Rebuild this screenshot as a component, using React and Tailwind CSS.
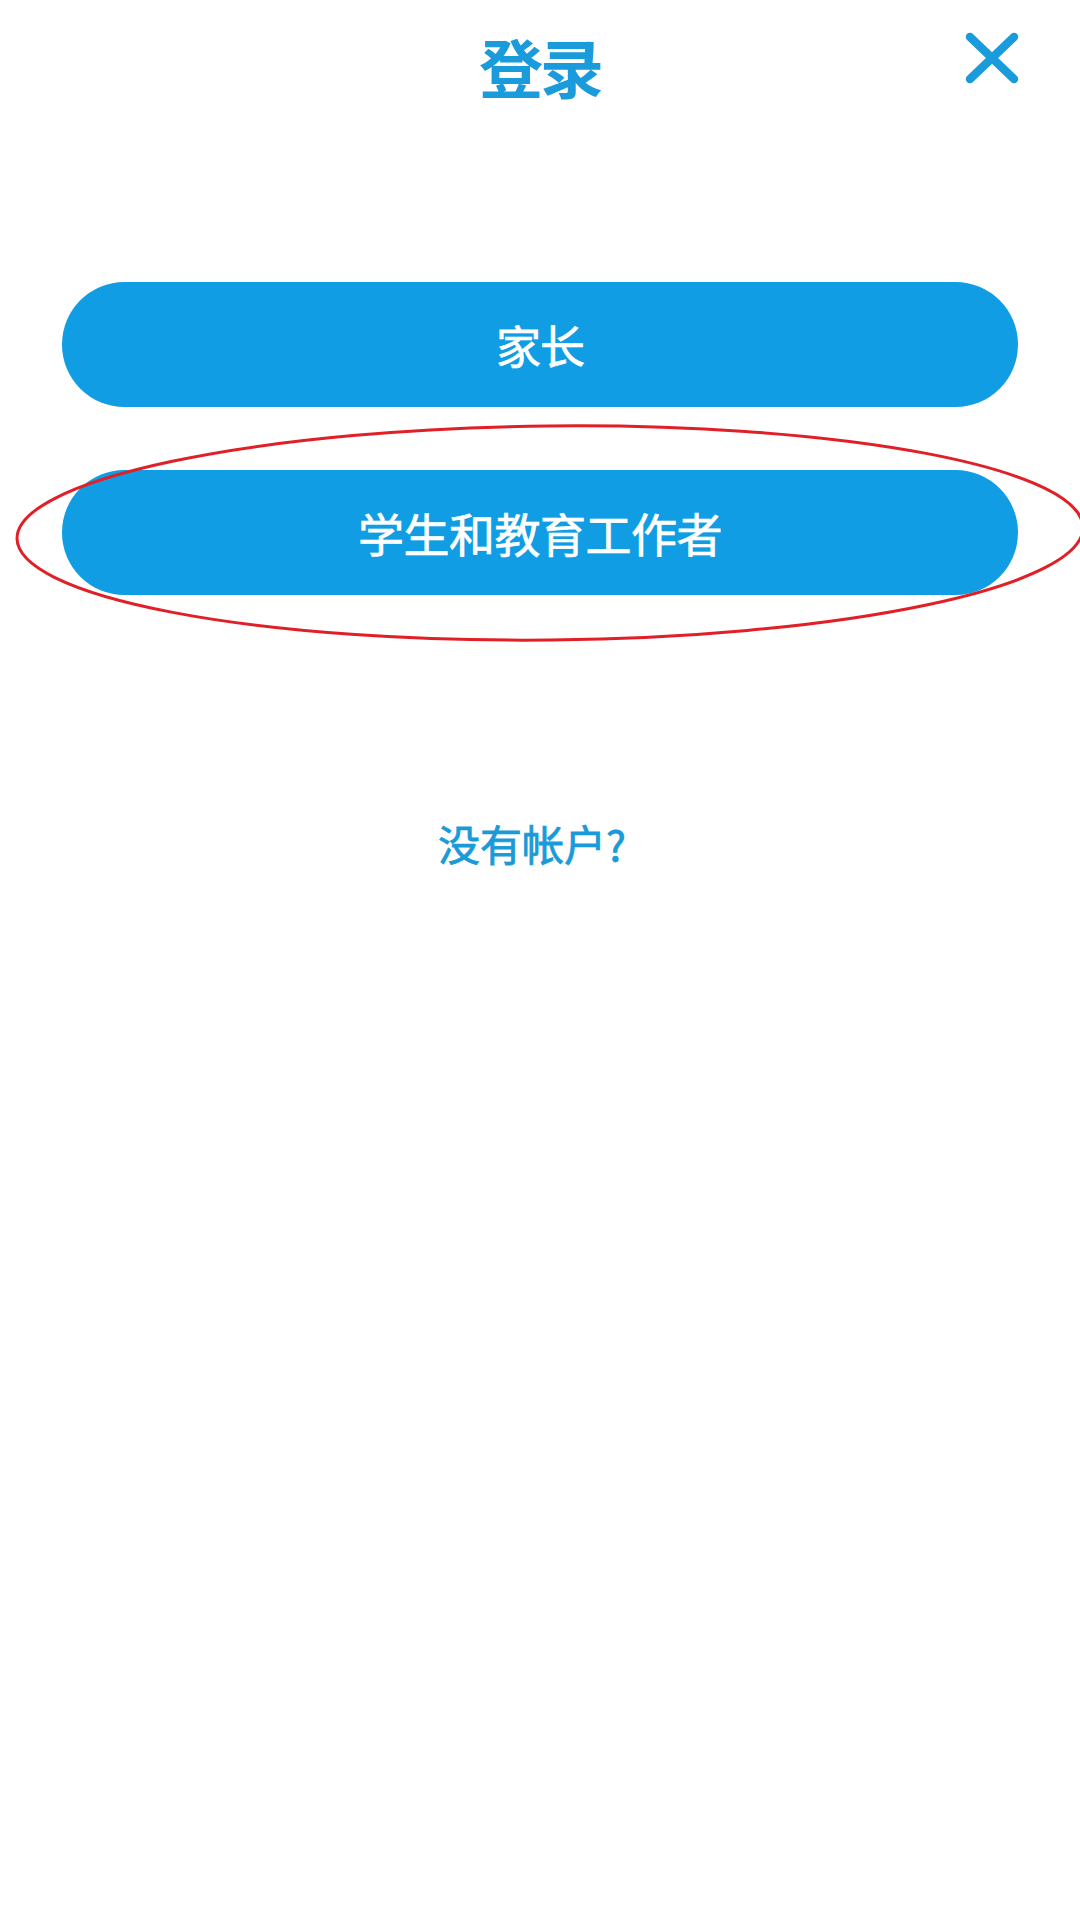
import React from "react";

const cjk = { fontFamily: '"Noto Sans CJK SC", "Noto Sans", sans-serif' };

export default function App() {
  return (
    <div className="relative w-[1080px] h-[1920px] bg-white overflow-hidden" style={cjk}>
      {/* header */}
      <header className="relative h-[130px] flex items-center justify-center">
        <h1 className="text-[64px] leading-none font-bold text-[#1a9bdc] tracking-[-3px]">登录</h1>
        <button className="absolute right-[60px] top-[32px] w-[56px] h-[52px] flex items-center justify-center">
          <svg width="56" height="52" viewBox="0 0 56 52" fill="none">
            <path d="M6 5 L50 47 M50 5 L6 47" stroke="#1a9bdc" strokeWidth="8.5" strokeLinecap="round" />
          </svg>
        </button>
      </header>

      {/* buttons */}
      <div className="px-[62px] pt-[152px] flex flex-col gap-[63px]">
        <button className="h-[125px] w-full rounded-full bg-[#119de3] text-white text-[45px] tracking-[-1px] [-webkit-text-stroke:0.7px_white]">
          家长
        </button>
        <button className="h-[125px] w-full rounded-full bg-[#119de3] text-white text-[46px] tracking-[-0.5px] [-webkit-text-stroke:0.7px_white]">
          学生和教育工作者
        </button>
      </div>

      <div className="mt-[216px] pr-[16px] flex justify-center">
        <a className="text-[42px] text-[#1a9ad8] [-webkit-text-stroke:0.8px_#1a9ad8]">没有帐户?</a>
      </div>

      {/* red annotation ellipse */}
      <svg
        className="absolute left-0 top-[420px] pointer-events-none"
        width="1080"
        height="230"
        viewBox="0 0 1080 230"
      >
        <ellipse
          cx="550"
          cy="113"
          rx="533"
          ry="107"
          transform="rotate(-0.6 550 113)"
          fill="none"
          stroke="#e01f26"
          strokeWidth="3"
        />
      </svg>
    </div>
  );
}
